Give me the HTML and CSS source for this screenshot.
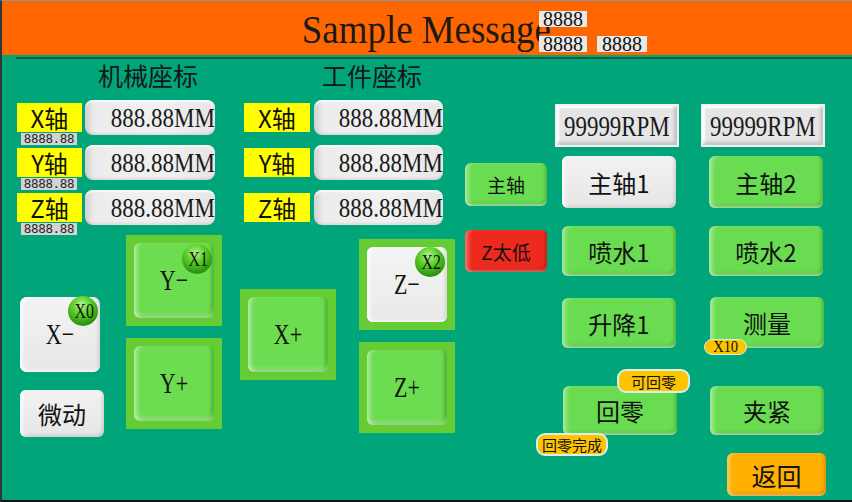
FILE: index.html
```html
<!DOCTYPE html>
<html lang="zh">
<head>
<meta charset="utf-8">
<title>HMI</title>
<link rel="stylesheet" href="styles.css">
</head>
<body>
<div class="screen">
  <header class="topbar">
    <div class="title"><span class="tall">Sample Message</span></div>
    <span class="tag8 tg1">8888</span>
    <span class="tag8 tg2">8888</span>
    <span class="tag8 tg3">8888</span>
  </header>
  <div class="rule"></div>
  <div class="main">
    <section class="left">
      <div class="coords">
        <div class="ccol mach">
          <div class="ctitle">机械座标</div>
          <div class="crow">
            <div class="axis"><span class="ylab">X轴</span><span class="mini">8888.88</span></div>
            <div class="val"><span class="num">888.88MM</span></div>
          </div>
          <div class="crow">
            <div class="axis"><span class="ylab">Y轴</span><span class="mini">8888.88</span></div>
            <div class="val"><span class="num">888.88MM</span></div>
          </div>
          <div class="crow">
            <div class="axis"><span class="ylab">Z轴</span><span class="mini">8888.88</span></div>
            <div class="val"><span class="num">888.88MM</span></div>
          </div>
        </div>
        <div class="ccol work">
          <div class="ctitle">工件座标</div>
          <div class="crow">
            <div class="axis"><span class="ylab">X轴</span></div>
            <div class="val"><span class="num">888.88MM</span></div>
          </div>
          <div class="crow">
            <div class="axis"><span class="ylab">Y轴</span></div>
            <div class="val"><span class="num">888.88MM</span></div>
          </div>
          <div class="crow">
            <div class="axis"><span class="ylab">Z轴</span></div>
            <div class="val"><span class="num">888.88MM</span></div>
          </div>
        </div>
      </div>
      <div class="jog">
        <div class="jcol c1">
          <div class="wkey xminus"><span class="jl">X−</span><span class="ball b0"><span class="bl">X0</span></span></div>
          <div class="wbtn fine">微动</div>
        </div>
        <div class="jcol c2">
          <div class="key"><div class="kin"><span class="jl">Y−</span></div><span class="ball b1"><span class="bl">X1</span></span></div>
          <div class="key gap"><div class="kin"><span class="jl">Y+</span></div></div>
        </div>
        <div class="jcol c3">
          <div class="key"><div class="kin"><span class="jl">X+</span></div></div>
        </div>
        <div class="jcol c4">
          <div class="key"><div class="kin white"><span class="jl">Z−</span></div><span class="ball b2"><span class="bl">X2</span></span></div>
          <div class="key gap"><div class="kin"><span class="jl">Z+</span></div></div>
        </div>
      </div>
    </section>
    <section class="right">
      <div class="rcol ra">
        <div class="gbtn small spindle">主轴</div>
        <div class="rbtn small low">Z太低</div>
      </div>
      <div class="rcol rb">
        <div class="rpm"><span class="rnum">99999RPM</span></div>
        <div class="wbtn big r2">主轴1</div>
        <div class="gbtn big r3">喷水1</div>
        <div class="gbtn big r4">升降1</div>
        <div class="gbtn big r5 home">回零
          <span class="pill p-can">可回零</span>
          <span class="pill p-done">回零完成</span>
        </div>
      </div>
      <div class="rcol rc">
        <div class="rpm"><span class="rnum">99999RPM</span></div>
        <div class="gbtn big r2">主轴2</div>
        <div class="gbtn big r3">喷水2</div>
        <div class="gbtn big r4b measure">测量
          <span class="pill p-x10"><span class="x10">X10</span></span>
        </div>
        <div class="gbtn big r5">夹紧</div>
        <div class="obtn back">返回</div>
      </div>
    </section>
  </div>
</div>
</body>
</html>
```

FILE: styles.css
```css
* { box-sizing: border-box; }
html, body { margin: 0; padding: 0; }
body {
  width: 852px;
  height: 502px;
  overflow: hidden;
  background: #00a67a;
  font-family: "Noto Sans CJK SC", "Noto Sans", sans-serif;
  color: #111;
}
.screen {
  position: relative;
  width: 852px;
  height: 502px;
  background: #00a67a;
  overflow: hidden;
}
.screen::after {
  content: "";
  position: absolute;
  inset: 0;
  border-left: 2px solid #2b3a35;
  border-bottom: 2px solid #111;
  border-top: 1px solid #7f97a6;
  pointer-events: none;
}

/* header */
.topbar {
  position: relative;
  height: 55px;
  background: #ff6600;
  display: flex;
  justify-content: center;
  align-items: center;
}
.title {
  font-family: "Liberation Serif", serif;
  font-size: 41px;
  line-height: 41px;
  color: #1a1a1a;
  margin-top: 4px;
}
.tall { display: inline-block; transform: scaleX(0.9); }
.tag8 {
  position: absolute;
  height: 16px;
  background: #e9e9e9;
  font-family: "Liberation Serif", serif;
  font-size: 20px;
  line-height: 16px;
  color: #111;
  text-align: center;
}
.tg1 { left: 539px; top: 11px; width: 48px; }
.tg2 { left: 539px; top: 36px; width: 48px; }
.tg3 { left: 597px; top: 36px; width: 50px; }

.rule {
  height: 2px;
  margin: 2px 0 0 16px;
  background: #0c5e47;
}

/* main */
.main { display: flex; height: 443px; }
.left { width: 460px; }
.right { flex: 1; display: flex; align-items: flex-start; }

.coords { display: flex; height: 176px; }
.ccol.mach { margin-left: 17px; width: 198px; }
.ccol.work { margin-left: 29px; width: 199px; }
.ctitle {
  height: 41px;
  font-size: 25px;
  line-height: 32px;
  padding-top: 0;
  color: #161616;
}
.mach .ctitle { padding-left: 81px; }
.work .ctitle { padding-left: 78px; }

.crow { display: flex; height: 35px; margin-bottom: 10px; align-items: flex-start; }
.axis { display: flex; flex-direction: column; height: 35px; overflow: visible; }
.mach .axis { width: 65px; margin-right: 3px; }
.work .axis { width: 66px; margin-right: 4px; }
.ylab {
  display: block;
  margin-top: 3px;
  height: 29px;
  background: #ffff00;
  text-align: center;
  font-size: 24px;
  line-height: 29px;
  color: #111;
}
.mini {
  display: block;
  flex: none;
  margin: 1px 0 0 4px;
  width: 56px;
  height: 12px;
  background: #d3d3d3;
  font-family: "DejaVu Sans Mono", monospace;
  font-size: 12.5px;
  line-height: 12px;
  color: #2a2a2a;
  text-align: center;
  letter-spacing: -0.3px;
}
.val {
  flex: 1;
  height: 35px;
  border-radius: 8px;
  background: linear-gradient(to right, #cfcfcf 0, #ececec 9px, #f1f1f1 60%, #e6e6e6 100%);
  box-shadow: inset 0 -2px 2px rgba(0,0,0,.08), inset 0 2px 2px rgba(255,255,255,.8);
  display: flex;
  justify-content: flex-end;
  align-items: center;
  white-space: nowrap;
}
.num {
  display: inline-block;
  font-family: "Liberation Serif", serif;
  font-size: 28px;
  line-height: 30px;
  color: #1a1a1a;
  transform: scaleX(0.82);
  transform-origin: right center;
  flex: none;
}

/* jog */
.jog { display: flex; align-items: flex-start; }
.jcol { display: flex; flex-direction: column; }
.c1 { margin-left: 20px; margin-top: 62px; width: 84px; }
.c2 { margin-left: 22px; }
.c3 { margin-left: 18px; margin-top: 54px; }
.c4 { margin-left: 23px; margin-top: 4px; }

.key {
  position: relative;
  width: 96px;
  height: 91px;
  background: #66cc33;
  padding: 8px;
}
.key.gap { margin-top: 12px; }
.kin {
  width: 100%;
  height: 100%;
  border-radius: 6px;
  background: #6cdc50;
  box-shadow: inset 5px 0 4px -2px rgba(255,255,255,.45), inset 0 -5px 4px -2px rgba(255,255,255,.4), inset -3px -2px 3px rgba(30,110,10,.35);
  display: flex;
  align-items: center;
  justify-content: center;
}
.kin.white {
  background: linear-gradient(#f4f4f4, #e9e9e9);
  box-shadow: inset 4px 0 4px -2px #fff, inset 0 -4px 4px -2px #fff, inset -2px -2px 3px rgba(0,0,0,.12);
}
.jl {
  display: inline-block;
  font-family: "Liberation Serif", serif;
  font-size: 22px;
  color: #111;
  transform: scaleY(1.35);
}
.wkey {
  position: relative;
  width: 80px;
  height: 75px;
  border-radius: 7px;
  background: linear-gradient(#f3f3f3, #e7e7e7);
  box-shadow: inset 4px 0 4px -2px #fff, inset 0 -4px 4px -2px #fff, inset -2px -2px 3px rgba(0,0,0,.12);
  display: flex;
  align-items: center;
  justify-content: center;
}
.wbtn {
  border-radius: 6px;
  background: linear-gradient(#f2f2f2, #e6e6e6);
  box-shadow: inset 4px 0 4px -2px #fff, inset -2px -2px 3px rgba(0,0,0,.12);
  display: flex;
  align-items: center;
  justify-content: center;
  font-size: 24px;
  color: #111;
}
.fine { width: 84px; height: 47px; margin-top: 18px; }

.ball {
  position: absolute;
  width: 30px;
  height: 30px;
  border-radius: 50%;
  background: radial-gradient(circle at 45% 30%, #b4f58f 0, #5ccf2a 35%, #2f9a12 70%, #1d6f08 100%);
  display: flex;
  align-items: center;
  justify-content: center;
}
.b0 { left: 48px; top: -1px; }
.b1 { left: 56px; top: 9px; }
.b2 { left: 56px; top: 8px; }
.bl {
  display: inline-block;
  flex: none;
  font-family: "Liberation Serif", serif;
  font-size: 20px;
  line-height: 20px;
  color: #111;
  transform: scale(0.8, 1.05);
  margin-left: 3px;
}

/* right */
.rcol { display: flex; flex-direction: column; align-items: flex-start; }
.ra { margin-left: 5px; width: 82px; }
.rb { margin-left: 8px; width: 124px; }
.rc { margin-left: 22px; width: 124px; }

.rpm {
  margin-top: 45px;
  width: 124px;
  height: 43px;
  background: #e5e5e5;
  border: 2px solid #f1f1f1;
  box-shadow: inset -3px -3px 3px rgba(0,0,0,.14), inset 2px 2px 2px #fff;
  display: flex;
  justify-content: center;
  align-items: center;
  white-space: nowrap;
}
.rnum {
  display: inline-block;
  flex: none;
  font-family: "Liberation Serif", serif;
  font-size: 29px;
  line-height: 30px;
  color: #1a1a1a;
  transform: scaleX(0.79);
}

.gbtn {
  position: relative;
  border-radius: 6px;
  background: #69dc52;
  box-shadow: inset 5px 0 4px -2px rgba(255,255,255,.45), inset 0 -4px 3px -2px rgba(255,255,255,.45), inset -2px -3px 3px rgba(30,110,10,.35);
  display: flex;
  align-items: center;
  justify-content: center;
  color: #111;
}
.big { width: 114px; font-size: 24px; }
.small { width: 82px; font-size: 19px; }
.spindle { height: 43px; margin-top: 104px; }
.rbtn {
  border-radius: 5px;
  background: #ee2a1e;
  box-shadow: inset 5px 0 4px -2px rgba(255,255,255,.35), inset 0 -4px 3px -2px rgba(255,255,255,.3), inset -2px -3px 3px rgba(120,0,0,.35);
  display: flex;
  align-items: center;
  justify-content: center;
  color: #111;
}
.low { height: 42px; margin-top: 24px; }

.r2 { height: 52px; margin: 9px 0 0 7px; }
.rc .r2 { margin-left: 8px; }
.r3 { height: 50px; margin: 18px 0 0 7px; }
.rc .r3 { margin-left: 8px; }
.r4 { height: 50px; margin: 22px 0 0 7px; }
.r4b { height: 51px; margin: 21px 0 0 9px; }
.r5 { height: 49px; margin: 38px 0 0 8px; }
.rc .r5 { margin-left: 9px; }

.obtn {
  width: 99px;
  height: 43px;
  margin: 18px 0 0 26px;
  border-radius: 6px;
  background: #ffb000;
  box-shadow: inset 5px 0 4px -2px rgba(255,255,255,.35), inset 0 -4px 3px -2px rgba(255,255,255,.3), inset -2px -3px 3px rgba(160,90,0,.35);
  display: flex;
  align-items: center;
  justify-content: center;
  font-size: 25px;
  color: #111;
}

.pill {
  position: absolute;
  background: #ffc400;
  border: 2px solid #d9efe8;
  border-radius: 9px;
  color: #111;
  display: flex;
  align-items: center;
  justify-content: center;
  white-space: nowrap;
}
.p-can { left: 54px; top: -17px; width: 73px; height: 24px; font-size: 15px; }
.p-done { left: -27px; top: 47px; width: 72px; height: 23px; font-size: 15px; }
.p-x10 { left: -6px; top: 42px; width: 43px; height: 16px; border-width: 1px; border-radius: 8px; }
.x10 {
  display: inline-block;
  font-family: "Liberation Serif", serif;
  font-size: 17px;
  line-height: 14px;
  transform: scaleX(0.85);
}
```
